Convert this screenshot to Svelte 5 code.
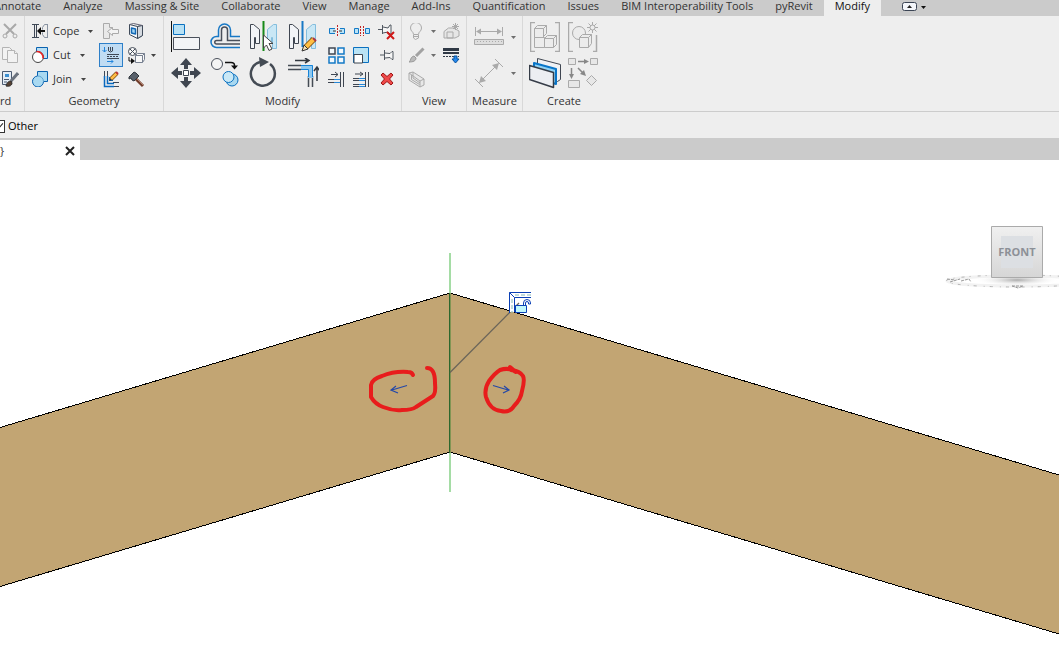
<script lang="ts">
	const tabs = [
		"Annotate",
		"Analyze",
		"Massing & Site",
		"Collaborate",
		"View",
		"Manage",
		"Add-Ins",
		"Quantification",
		"Issues",
		"BIM Interoperability Tools",
		"pyRevit",
		"Modify",
	]

	let active = $state("Modify")
	let other = $state(true)
	let beam_joins = $state(true)
</script>

{#snippet caret()}
	<svg class="caret" width="5" height="3" viewBox="0 0 5 3"><path d="M0 0h5L2.5 3z" fill="#444" /></svg>
{/snippet}

<div class="app">
	<nav class="tabs">
		{#each tabs as tab}
			<button class="tab" class:active={tab === active} onclick={() => (active = tab)}>{tab}</button>
		{/each}
		<button class="minimize" aria-label="Minimize ribbon">
			<svg width="25" height="12" viewBox="0 0 25 12">
				<rect x=".5" y="2.5" width="14" height="8" rx="2" fill="#f4f6fa" stroke="#3b4454" />
				<path d="M5 8h5L7.500 5z" fill="#222" />
				<path d="M19 6h5l-2.500 3z" fill="#111" />
			</svg>
		</button>
	</nav>

	<div class="ribbon">
		<section class="panel clipboard">
			<div class="tools">
				<button aria-label="Cut to clipboard">
					<svg width="18" height="18" viewBox="0 0 18 18" fill="none" stroke="#a9a9a9">
						<path d="M3 2l10 10M15 2L5 12" stroke-width="2" />
						<circle cx="4" cy="14" r="2" /><circle cx="14" cy="14" r="2" />
					</svg>
				</button>
				<button aria-label="Copy to clipboard">
					<svg width="18" height="18" viewBox="0 0 18 18" fill="#f2f2f2" stroke="#b4b4b4">
						<path d="M1.500 1.500h7l3 3v9h-10z" /><path d="M6.500 4.500h7l3 3v9h-10z" /><path d="M13.500 4.500v3h3" />
					</svg>
				</button>
				<button aria-label="Match type">
					<svg width="18" height="18" viewBox="0 0 18 18">
						<path d="M1.500 1.500h9v13h-9z" fill="#e4edf6" stroke="#4b5a70" />
						<path d="M4 4h4v3H4z" fill="#3d8fd0" /><path d="M3 9.500h5M3 12h3" stroke="#4b5a70" />
						<path d="M17 3l-7 8" stroke="#6b737e" stroke-width="3" />
						<path d="M5 16c1-4 3-5 5-5l1 2c0 2-2 4-6 3z" fill="#574233" stroke="#333" />
					</svg>
				</button>
			</div>
			<h2>rd</h2>
		</section>

		<section class="panel geometry">
			<div class="tools">
				<button class="labelled">
					<svg width="16" height="16" viewBox="0 0 16 16" fill="none" stroke="#3f4856">
						<path d="M0 1.500h7M0 14.500h7M2.500 2v12M4.500 2v12" />
						<path d="M15.500 1.500h-3l-2 3v2M15.500 14.500h-3l-2-3v-2M15.500 1v14" stroke="#8993a2" />
						<path d="M7 8h6" stroke="#111" stroke-width="2" /><path d="M5 8l4-4v8z" fill="#111" stroke="none" />
					</svg>
					<span>Cope</span>{@render caret()}
				</button>
				<button aria-label="Cut opening">
					<svg width="16" height="16" viewBox="0 0 16 16" fill="#e9e9e9" stroke="#aaa">
						<path d="M.5.5h6v4h3v6h-3v5h-6z" /><path d="M4.500 8.500l5-4v2h6v4h-6v2z" fill="#f3f3f3" />
					</svg>
				</button>
				<button aria-label="Split face">
					<svg width="16" height="16" viewBox="0 0 16 16" stroke-linejoin="round">
						<path d="M1.500 1.500l8 2 5-1v10l-5 3-8-4z" fill="#f6f8fa" stroke="#3f4b5a" />
						<path d="M9.500 3.500v12l5-3v-10z" fill="#d5dae0" stroke="#3f4b5a" />
						<path d="M3.500 5l4 1v5l-4-1z" fill="#a5d6f3" stroke="#1267b4" stroke-width="1.500" />
						<path d="M1.500 1.500l4-1 9 2" fill="none" stroke="#667" />
					</svg>
				</button>

				<button class="labelled">
					<svg width="16" height="16" viewBox="0 0 16 16">
						<path d="M4.500.5h11v11h-11z" fill="#b8dff4" stroke="#0a62b0" />
						<circle cx="6" cy="10" r="5.500" fill="#fff" stroke="#444" />
						<path d="M4.500 4.500a6 6 0 0 1 6.500 7" fill="none" stroke="#e22" stroke-width="1.500" />
					</svg>
					<span>Cut</span>{@render caret()}
				</button>
				<button
					class="toggle"
					aria-label="Beam and column joins"
					aria-pressed={beam_joins}
					onclick={() => (beam_joins = !beam_joins)}
				>
					<svg width="18" height="18" viewBox="0 0 18 18" fill="none">
						<path d="M2.500 1v5M.5 4l2 2 2-2M5 15.500h6M9 13.500l2 2-2 2" stroke="#2385dc" />
						<path d="M6.500 1v4l2 1 2-1V1M8.500 1v4" stroke="#3f4856" />
						<path d="M5 8.500h12M5 12.500h12" stroke="#3f4856" /><path d="M5 10.500h12" stroke="#3f4856" stroke-dasharray="2 1" />
					</svg>
				</button>
				<button aria-label="Paint">
					<svg width="17" height="17" viewBox="0 0 17 17" fill="none" stroke="#444c58">
						<circle cx="4.500" cy="4.500" r="4" fill="#fafafa" /><path d="M2 2l5 5M7 2L2 7" />
						<path d="M7.500 8.500l2-2h7v6l-2 3h-7z" fill="#f8f8f8" stroke="#778090" /><path d="M7.500 8.500h7v7M14.500 8.500l2-2" stroke="#778090" />
						<path d="M1 10v4h3" stroke="#111" /><path d="M3 11l4 3-4 3z" fill="#111" stroke="none" />
					</svg>
				</button>
				<button class="drop" aria-label="Paint options">{@render caret()}</button>

				<button class="labelled">
					<svg width="16" height="16" viewBox="0 0 16 16" fill="#a9d9f1" stroke="#0a62b0">
						<path d="M5.500.5h10v10h-4a5.500 5.500 0 1 1-6-5.500z" />
						<path d="M5.500 5a5.500 5.500 0 0 1 6 5.500" fill="none" stroke="#5ba6d3" />
					</svg>
					<span>Join</span>{@render caret()}
				</button>
				<button aria-label="Wall joins">
					<svg width="17" height="17" viewBox="0 0 17 17" fill="none">
						<path d="M1.500 0v7M4.500 0v7M10 11.500h6M10 15.500h6" stroke="#3f4856" />
						<path d="M1.500 5v10.500H11M4.500 5v7.500H11" stroke="#0869bf" stroke-width="1.500" /><path d="M6.500 6v3.500H10" stroke="#0869bf" />
						<path d="M14 2l-6 6" stroke="#80510d" stroke-width="4" /><path d="M14 2l-6 6" stroke="#ffbd45" stroke-width="2.500" />
						<path d="M6 10l1-3 2 2z" fill="#333" /><path d="M13 1l2 2" stroke="#b33" stroke-width="2" />
					</svg>
				</button>
				<button aria-label="Demolish">
					<svg width="17" height="17" viewBox="0 0 17 17">
						<path d="M7 7l8 8" stroke="#703d2b" stroke-width="3" /><path d="M7 6l8 8" stroke="#b18170" />
						<path d="M1 6l5-5 2 1 3 3-5 5-2-1-1-2-2 1z" fill="#59616b" stroke="#30363d" />
					</svg>
				</button>
			</div>
			<h2>Geometry</h2>
		</section>

		<section class="panel modify">
			<div class="groups">
				<div class="tools large">
					<button aria-label="Align">
						<svg width="30" height="32" viewBox="0 0 30 32">
							<path d="M.5 0v31" stroke="#111" />
							<path d="M2.500 3.500h11v10h-11z" fill="#b7e0f4" stroke="#0a70c0" />
							<path d="M2.500 16.500h26v12h-26z" fill="#f3f4f7" stroke="#4a505b" />
						</svg>
					</button>
					<button aria-label="Offset">
						<svg width="30" height="30" viewBox="0 0 30 30" fill="none">
							<path d="M30 14.500h-9.500V8a5.500 5.500 0 0 0-12 0v6.500H6.500a5.500 5.500 0 0 0 0 11H30" stroke="#1878c5" stroke-width="1.500" />
							<path d="M30 18.500H17.500V8a3 3 0 0 0-6 0v10.500H6.500a1.500 1.500 0 0 0 0 3.500H30" stroke="#4a505b" stroke-width="1.500" />
						</svg>
					</button>
					<button aria-label="Mirror - Pick Axis">
						<svg width="30" height="32" viewBox="0 0 30 32">
							<path d="M1.500 3.500h3l6 5v14h-4v-6h-1v11h-4z" fill="#f2f4f7" stroke="#3f4651" />
							<path d="M27.500 3.500h-3l-6 5v14h4v-6h1v11h4z" fill="#c9e7f5" stroke="#83bddd" />
							<path d="M14.500 0v30" stroke="#178a18" stroke-width="2" />
							<path d="M14.500 14v13l3-3 2.500 5.500 3-1.500-3-5.500h4z" fill="#fff" stroke="#444" />
						</svg>
					</button>
					<button aria-label="Mirror - Draw Axis">
						<svg width="30" height="32" viewBox="0 0 30 32">
							<path d="M1.500 3.500h3l6 5v14h-4v-6h-1v11h-4z" fill="#f2f4f7" stroke="#3f4651" />
							<path d="M27.500 3.500h-3l-6 5v14h4v-6h1v11h4z" fill="#c9e7f5" stroke="#83bddd" />
							<path d="M14.500 0v26" stroke="#1878c5" stroke-width="2" />
							<path d="M26 18l-8 8" stroke="#805114" stroke-width="6" /><path d="M26 18l-8 8" stroke="#ffbe42" stroke-width="4" />
							<path d="M14 30l2-6 4 4z" fill="#f7dfb2" stroke="#333" /><path d="M25 17l3 3" stroke="#a34" stroke-width="2" />
						</svg>
					</button>
					<button aria-label="Move">
						<svg width="30" height="30" viewBox="0 0 30 30" fill="#3f4650">
							<path d="M15 0l6 7h-4v4h-4V7H9zM15 30l6-7h-4v-4h-4v4H9zM0 15l7-6v4h4v4H7v4zM30 15l-7-6v4h-4v4h4v4z" />
							<path d="M12.500 12.500h5v5h-5z" fill="#fff" stroke="#3f4650" />
						</svg>
					</button>
					<button aria-label="Copy">
						<svg width="30" height="30" viewBox="0 0 30 30" fill="none">
							<circle cx="7" cy="6" r="5.500" fill="#f4f4f4" stroke="#4a505b" />
							<path d="M15 4.500h6q3.500 0 3.500 3v1" stroke="#111" stroke-width="1.500" /><path d="M21 7.500h7l-3.500 4z" fill="#111" />
							<circle cx="22" cy="22" r="6" fill="#a8d8f0" stroke="#0a70c0" /><circle cx="18.500" cy="19" r="5.500" fill="#c9e8f6" stroke="#0a70c0" />
						</svg>
					</button>
					<button aria-label="Rotate">
						<svg width="30" height="32" viewBox="0 0 30 32">
							<path d="M21 7a12 12 0 1 1-10-2" fill="none" stroke="#444b54" stroke-width="2.500" />
							<path d="M10 0l10 5-9 5z" fill="#444b54" />
						</svg>
					</button>
					<button aria-label="Trim/Extend to Corner">
						<svg width="32" height="30" viewBox="0 0 32 30" fill="none">
							<path d="M8 2.500h13M18 0l4 2.500L18 5M30 23V10M27 13l3-4 3 4" stroke="#333940" stroke-width="1.500" />
							<path d="M1 7.500h13M1 11.500h13M21.500 18v11M25.500 18v11" stroke="#444b54" stroke-width="1.500" />
							<path d="M14 9.500h9.500V20" stroke="#8fc8ee" stroke-width="5" /><path d="M14 7.500h11.500V19M14 11.500h7.500V19" stroke="#1683d8" />
						</svg>
					</button>
				</div>
				<div class="tools small">
					<button aria-label="Split Element">
						<svg width="16" height="12" viewBox="0 0 16 12">
							<path d="M.5 3.500h15v5H.5z" fill="#b9e3f7" stroke="#147ac6" /><path d="M6 2h5v8H6z" fill="#eee" />
							<path d="M8.500 0v12" stroke="#c32222" stroke-dasharray="2 1" /><path d="M4 6h3M10 6h3" stroke="#333" />
						</svg>
					</button>
					<button aria-label="Split with Gap">
						<svg width="16" height="12" viewBox="0 0 16 12">
							<path d="M.5 3.500h4v5h-4zM11.500 3.500h4v5h-4z" fill="#b9e3f7" stroke="#147ac6" />
							<path d="M6.500 1v10M9.500 1v10" stroke="#c32222" stroke-dasharray="2 1" />
						</svg>
					</button>
					<button aria-label="Unpin">
						<svg width="17" height="17" viewBox="0 0 17 17" fill="#f5f5f5" stroke="#515861">
							<path d="M0 6.500h4M4.500 2v9M5 4l5 1 2-3h1v9h-1l-2-2-5 1" />
							<path d="M9 9l7 7M16 9l-7 7" stroke="#cf1818" stroke-width="2" />
						</svg>
					</button>
					<button aria-label="Array">
						<svg width="17" height="17" viewBox="0 0 17 17" fill="#f2f8fc" stroke="#147ac6">
							<path d="M1 1h6v6H1z" stroke="#3f4651" stroke-width="1.500" />
							<path d="M10 1h6v6h-6zM1 10h6v6H1zM10 10h6v6h-6z" stroke-width="1.500" />
						</svg>
					</button>
					<button aria-label="Scale">
						<svg width="17" height="17" viewBox="0 0 17 17">
							<path d="M.5.5h15v15H.5z" fill="#b9e3f5" stroke="#0a70c0" /><path d="M1 7.500h8.500V16H1z" fill="#fff" stroke="#3f4651" />
						</svg>
					</button>
					<button aria-label="Pin">
						<svg width="14" height="12" viewBox="0 0 14 12" fill="#f5f5f5" stroke="#515861">
							<path d="M0 6h4M4.500 1v10M5 4l5 .5 2-2h1v8h-1l-2-2-5 .5" />
						</svg>
					</button>
					<button aria-label="Trim/Extend Single Element">
						<svg width="17" height="17" viewBox="0 0 17 17" fill="none" stroke="#3f4651">
							<path d="M12.500 1v15M15.500 1v15M3 3.500h7M7 1l3 2.500L7 6M0 8.500h6M0 11.500h6" />
							<path d="M6 8.500h6M6 11.500h6" stroke="#2788d8" />
						</svg>
					</button>
					<button aria-label="Trim/Extend Multiple Elements">
						<svg width="17" height="17" viewBox="0 0 17 17" fill="none" stroke="#3f4651">
							<path d="M12.500 1v15M15.500 1v15M2 3h8M7 1l3 2-3 2M0 7.500h6M0 9.500h6M0 13.500h6M0 15.500h6" />
							<path d="M6 7.500h6M6 9.500h6M6 13.500h6M6 15.500h6" stroke="#2788d8" />
						</svg>
					</button>
					<button aria-label="Delete">
						<svg width="14" height="14" viewBox="0 0 14 14">
							<path d="M3 1l4 3.500L11 1l2 2-3.500 4L13 11l-2 2-4-3.500L3 13l-2-2 3.500-4L1 3z" fill="#ee4848" stroke="#9f1515" />
						</svg>
					</button>
				</div>
			</div>
			<h2>Modify</h2>
		</section>

		<section class="panel view">
			<div class="tools">
				<button aria-label="Hide in view">
					<svg width="14" height="17" viewBox="0 0 14 17" fill="#eee" stroke="#aaa">
						<path d="M4.500 11.500c0-3-3-3-3-6.500a5.500 5.500 0 0 1 11 0c0 3.500-3 3.500-3 6.500z" /><path d="M4.500 12v3l2 1.500 3-1.500v-3M5 13.500h5" />
					</svg>
				</button>
				<button class="drop dim" aria-label="Hide options">{@render caret()}</button>
				<button aria-label="Selection box">
					<svg width="17" height="17" viewBox="0 0 17 17" fill="#e6e6e6" stroke="#aaa">
						<path d="M1 8.500L5.500 5h5L16 8v5l-4 2H1zM4 9h6v6H4z" /><path d="M12.500 0v7M9 3.500h7M10 1l5 5M15 1l-5 5" />
					</svg>
				</button>
				<button aria-label="Override graphics">
					<svg width="17" height="17" viewBox="0 0 17 17"><path d="M15.500 1.500L8 9" stroke="#a2a2a2" stroke-width="3" /><path d="M1 15c2-1 1-5 5-6l2 2c0 3-3 4-7 4z" fill="#bbb" stroke="#999" /></svg>
				</button>
				<button class="drop dim" aria-label="Override options">{@render caret()}</button>
				<button aria-label="Linework">
					<svg width="17" height="16" viewBox="0 0 17 16">
						<path d="M0 2.500h16" stroke="#303946" stroke-width="3" /><path d="M0 6h16" stroke="#303946" stroke-width="2" />
						<path d="M0 9.500h16" stroke="#303946" stroke-dasharray="2 1" /><path d="M11 9h3v3h2l-3.500 4L9 12h2z" fill="#2588ed" stroke="#07529e" />
					</svg>
				</button>
				<button aria-label="Displace elements">
					<svg width="17" height="17" viewBox="0 0 17 17" fill="#e8e8e8" stroke="#aaa" stroke-linejoin="round">
						<path d="M1 2l4-1 11 7v6l-4 2L1 9z" /><path d="M1 2l11 8v6M12 10l4-2M3.500 4v4.500l8 5M5 1v6l7 5" fill="none" />
					</svg>
				</button>
			</div>
			<h2>View</h2>
		</section>

		<section class="panel measure">
			<div class="tools">
				<button aria-label="Measure">
					<svg width="30" height="24" viewBox="0 0 30 24" stroke="#aaa" fill="#aaa">
						<path d="M1.500 2v9M28.500 2v9M3 6.500h24" fill="none" /><path d="M2 6.500l5-3v6zM28 6.500l-5-3v6z" stroke="none" />
						<path d="M.5 14.500h29v5H.5z" fill="#dedede" /><path d="M3 16.500h25" stroke-dasharray="1 2" />
					</svg>
				</button>
				<button class="drop dim" aria-label="Measure options">{@render caret()}</button>
				<button aria-label="Aligned dimension">
					<svg width="30" height="30" viewBox="0 0 30 30" stroke="#aaa" fill="#aaa">
						<path d="M1 21l8 8M21 1l8 8M6 24L24 6" /><path d="M5 25l2-7 5 5zM25 5l-7 2 5 5z" stroke="none" />
					</svg>
				</button>
				<button class="drop dim" aria-label="Dimension options">{@render caret()}</button>
			</div>
			<h2>Measure</h2>
		</section>

		<section class="panel create">
			<div class="tools">
				<button aria-label="Create assembly">
					<svg width="30" height="30" viewBox="0 0 30 30" fill="#ececec" stroke="#aaa">
						<path d="M5 .5H.5v29H5M25 .5h4.500v29H25" fill="none" stroke-width="1.500" />
						<path d="M4.500 6.500l3-3h9v8l-3 3M4.500 6.500h9v9h-9zM13.500 6.500l3-3M4.500 15.500h10v10h-10zM14.500 16.500l3-3h9v9l-3 3h-9zM14.500 16.500h9v9M23.500 16.500l3-3" />
					</svg>
				</button>
				<button aria-label="Create parts">
					<svg width="30" height="30" viewBox="0 0 30 30" fill="#ececec" stroke="#aaa">
						<path d="M5 .5H.5v29H5M25 29.500h3.500V13" fill="none" stroke-width="1.500" /><circle cx="11" cy="11" r="6.500" />
						<path d="M11.500 15.500l3-3h9v9l-3 4h-9zM11.500 15.500h9v10M20.500 15.500l3-3" />
						<path d="M24.500 0v11M19 5.500h11M20.500 1.500l8 8M28.500 1.500l-8 8" /><circle cx="24.500" cy="5.500" r="2.500" />
					</svg>
				</button>
				<button aria-label="Create group">
					<svg width="32" height="32" viewBox="0 0 32 32" stroke-linejoin="round">
						<path d="M8.500 1.500l23 6v15l-3 2-20-9z" fill="#eff1f4" stroke="#3f4651" />
						<path d="M5 6l22 6v15L5 20z" fill="#8fd2f5" stroke="#0875c8" stroke-width="2" />
						<path d="M.5 8.500l24 7v15l-24-8z" fill="#eceef2" stroke="#353c47" stroke-width="1.500" />
					</svg>
				</button>
				<button aria-label="Create similar">
					<svg width="30" height="30" viewBox="0 0 30 30" fill="#e7e7e7" stroke="#aaa">
						<path d="M.5.5h7v6h-7zM22.500.5h7v6h-7zM.5 22.500h11v7H.5zM18.500 22.500l5-5 5 5-5 5z" />
						<path d="M10 3.500h7M3.500 10v7M10 10l6 6" stroke="#888" stroke-width="1.500" />
						<path d="M16 1l5 2.500L16 6zM1 16h5l-2.500 5zM18 18l-6-2 4-4z" fill="#888" stroke="none" />
					</svg>
				</button>
			</div>
			<h2>Create</h2>
		</section>
	</div>

	<div class="options">
		<label><input type="checkbox" bind:checked={other} />Other</label>
	</div>

	<div class="documents">
		<div class="document">
			<span>}</span>
			<button aria-label="Close view">
				<svg width="10" height="10" viewBox="0 0 10 10"><path d="M1 1l8 8M9 1L1 9" stroke="#222" stroke-width="2" /></svg>
			</button>
		</div>
	</div>

	<main>
		<svg class="model" viewBox="0 160 1059 485" preserveAspectRatio="xMidYMin slice" fill="none">
			<path d="M0 427.500L450 293l609 182v159L450 452 0 587z" fill="#c2a573" />
			<path d="M0 427.500L450 293l609 182M0 586.500l450-134.500L1059 634" stroke="#000" shape-rendering="crispEdges" />
			<path d="M450 253v40M450 453v39" stroke="#a5dca5" stroke-width="2" />
			<path d="M449.500 293v160" stroke="#2d672d" /><path d="M450.500 293v160" stroke="#819554" />
			<path d="M450 372.500L519 303" stroke="#6b655a" stroke-width="1.300" />

			<!-- join control and padlock -->
			<path d="M509 292h22v5h-16v15h-6z" fill="#fff" />
			<path d="M531 292.500h-21.500V313M531 297.500h-16.500V312M509.500 292.500l5 5" stroke="#0b40b5" />
			<path d="M531 295h-17M512 299v14" stroke="#80b7b4" stroke-dasharray="4 2" />
			<path d="M515.500 305.500h11v7h-11z" fill="#c1f8fb" stroke="#0b40b5" />
			<path d="M523.500 305v-2a3.500 3.500 0 0 1 7 0v1h-2v-1a1.500 1.500 0 0 0-3 0v2" fill="#fff" stroke="#0b40b5" />

			<path d="M407 385.500l-15 4.500M396 386l-5 4 7 3M493 385.500l15 4.500M504 386l5 4-6 3" stroke="#2448a8" stroke-width="1.200" />

			<g stroke="#e81c1c" stroke-width="4" stroke-linecap="round" stroke-linejoin="round">
				<path d="M413 375q-1-3-5-3-14-1-26 4-10 3-11 9v12q4 7 12 10 10 4 19 3 10 0 14-3l17-11q3-3 2-13 0-15-8-15" />
				<path d="M510 367l6 5q-7-5-16-2-5 3-11 11-5 8-3 16 4 13 15 14 9 2 13-5 7-7 8-15 3-11 1-15-3-5-12-6" />
			</g>
		</svg>

		<div class="cube">
			<svg width="118" height="76" viewBox="0 0 118 76">
				<defs>
					<linearGradient id="face" x2="0" y2="1"><stop stop-color="#f0f0f0" /><stop offset="1" stop-color="#d6d6d6" /></linearGradient>
					<radialGradient id="shade"><stop stop-color="#aaa" /><stop offset="1" stop-color="#fff" stop-opacity="0" /></radialGradient>
				</defs>
				<ellipse cx="76" cy="61" rx="70" ry="5" fill="none" stroke="#f2f2f2" stroke-width="3" />
				<ellipse cx="76" cy="61" rx="71" ry="6" fill="none" stroke="#b5b5b5" stroke-dasharray="3 5 1 7" />
				<ellipse cx="76" cy="60" rx="42" ry="6" fill="url(#shade)" />
				<path d="M6 59l8 1M9 62l10-3M20 61l8-2 2 3M71 66h11l-5 2z" fill="none" stroke="#999" stroke-dasharray="3 1" />
				<path d="M50.500 6.500h51v51h-51z" fill="url(#face)" stroke="#aaa" /><path d="M60 16h32v32H60z" fill="#dcdfe3" />
				<text x="76" y="36" text-anchor="middle">FRONT</text>
			</svg>
		</div>
	</main>
</div>

<style>
	:global(body) {
		background: #fff;
	}

	.app {
		display: flex;
		flex-direction: column;
		min-height: 100vh;
		overflow: hidden;
		background: #eee;
		color: #333;
		font-family: "Open Sans", "Noto Sans", sans-serif;
		font-size: 11px;
		line-height: 16px;
	}

	button {
		display: flex;
		align-items: center;
		justify-content: center;
		padding: 0;
		border: 0;
		background: none;
		color: inherit;
		font: inherit;
	}

	svg {
		display: block;
		flex: none;
	}

	.tabs {
		display: flex;
		height: 16px;
		margin-left: -17px;
		background: #cbcbcb;
	}

	.tab {
		padding: 0 11px 4px;
		line-height: 12px;
		white-space: nowrap;
	}

	.tab.active {
		background: #eee;
		color: #111;
	}

	.minimize {
		margin-left: 21px;
		align-items: flex-start;
	}

	.ribbon {
		display: flex;
		border-bottom: 1px solid #ccc;
	}

	.panel {
		box-sizing: border-box;
		padding-top: 3px;
		border-right: 1px solid #d8d8d8;
	}

	.panel:last-child {
		border-right: 0;
	}

	.tools {
		display: grid;
		grid-auto-rows: 24px;
		align-items: center;
		justify-items: center;
	}

	h2 {
		margin: 0;
		font-size: 11px;
		font-weight: 400;
		line-height: 20px;
		text-align: center;
	}

	.clipboard {
		width: 25px;
	}

	.clipboard .tools {
		grid-template-columns: 20px;
	}

	.clipboard h2 {
		text-align: left;
	}

	.geometry .tools {
		grid-template-columns: 74px 24px 26px 8px;
		padding-right: 6px;
	}

	.geometry .labelled {
		justify-self: start;
		gap: 5px;
		margin-left: 7px;
		grid-column: 1;
	}

	.labelled .caret {
		margin-left: 4px;
	}

	.toggle {
		width: 24px;
		height: 24px;
	}

	.toggle[aria-pressed="true"] {
		background: #c0dcf3;
		box-shadow: inset 0 0 0 1px #2d7fc8;
	}

	.groups {
		display: flex;
		gap: 2px;
		padding: 0 2px;
	}

	.large {
		grid-template-columns: repeat(4, 39px);
		grid-auto-rows: 36px;
	}

	.small {
		grid-template-columns: repeat(3, 25px);
	}

	.view .tools {
		grid-template-columns: 28px 6px 30px;
	}

	.measure .tools {
		grid-template-columns: 44px 5px;
		grid-auto-rows: 36px;
		padding-right: 6px;
	}

	.create .tools {
		grid-template-columns: 44px 32px;
		grid-auto-rows: 36px;
		padding-right: 6px;
	}

	.dim {
		opacity: 0.75;
	}

	.options {
		padding: 6px 0 4px;
	}

	label {
		display: flex;
		align-items: center;
		gap: 3px;
		margin-left: -8px;
		color: #000;
	}

	input {
		appearance: none;
		box-sizing: border-box;
		width: 13px;
		height: 13px;
		margin: 0;
		border: 1px solid #333;
		background: #fff;
	}

	input:checked::after {
		content: "";
		display: block;
		box-sizing: border-box;
		width: 5px;
		height: 9px;
		margin: 0 auto;
		border: solid #222;
		border-width: 0 1px 1px 0;
		transform: rotate(40deg);
	}

	.documents {
		padding-top: 2px;
		background: #cbcbcb;
	}

	.document {
		display: flex;
		align-items: center;
		justify-content: space-between;
		box-sizing: border-box;
		width: 80px;
		height: 20px;
		padding: 1px 5px 0 0;
		background: #fff;
	}

	main {
		position: relative;
		flex: 1;
		background: #fff;
	}

	.model {
		width: 100%;
	}

	.cube {
		position: absolute;
		top: 60px;
		right: 0;
	}

	text {
		fill: #8c9097;
		font-size: 11px;
		font-weight: 700;
	}
</style>
